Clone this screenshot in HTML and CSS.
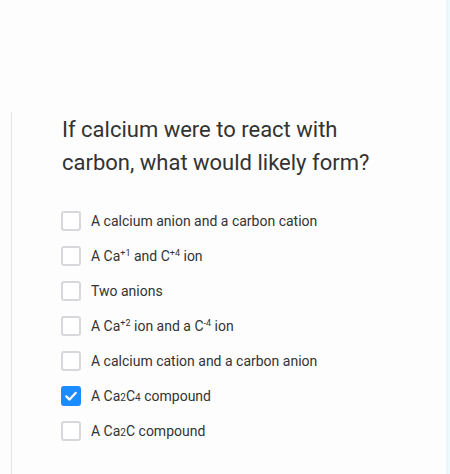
FILE: index.html
```html
<!DOCTYPE html>
<html>
<head>
<meta charset="utf-8">
<link rel="stylesheet" href="styles.css">
</head>
<body>
<div class="page">
  <div class="main">
    <div class="card">
      <h1 class="question">If calcium were to react with carbon, what would likely form?</h1>
      <ul class="options">
        <li class="option"><span class="box"></span><span class="label">A calcium anion and a carbon cation</span></li>
        <li class="option"><span class="box"></span><span class="label">A Ca<sup>+1</sup> and C<sup>+4</sup> ion</span></li>
        <li class="option"><span class="box"></span><span class="label">Two anions</span></li>
        <li class="option"><span class="box"></span><span class="label">A Ca<sup>+2</sup> ion and a C<sup>-4</sup> ion</span></li>
        <li class="option"><span class="box"></span><span class="label">A calcium cation and a carbon anion</span></li>
        <li class="option"><span class="box checked"><svg viewBox="0 0 20 20" width="20" height="20"><path d="M5.2 10.4 L8.6 13.6 L14.8 6.8" fill="none" stroke="#fff" stroke-width="2.2" stroke-linecap="round" stroke-linejoin="round"/></svg></span><span class="label">A Ca<span class="sub">2</span>C<span class="sub">4</span> compound</span></li>
        <li class="option"><span class="box"></span><span class="label">A Ca<span class="sub">2</span>C compound</span></li>
      </ul>
    </div>
  </div>
  <div class="strip"></div>
</div>
</body>
</html>
```

FILE: styles.css
```css
html, body {
  margin: 0;
  padding: 0;
}
body {
  background: #fdfdfd;
  font-family: Roboto, "Liberation Sans", sans-serif;
  color: #333;
  width: 450px;
  height: 474px;
  overflow: hidden;
}
.page {
  display: flex;
  height: 474px;
}
.main {
  flex: 1;
  padding-top: 112px;
  padding-left: 11px;
}
.card {
  border-left: 1px solid #e4e4e4;
  height: 100%;
  padding-left: 49px;
  box-sizing: border-box;
}
.strip {
  width: 4px;
  background: linear-gradient(to right, #e6f6fb, #eefafd);
}
.question {
  margin: 0;
  padding-top: 1px;
  padding-left: 1px;
  font-size: 22px;
  font-weight: 400;
  line-height: 33px;
  width: 320px;
  color: #333;
}
.options {
  list-style: none;
  margin: 0;
  padding: 0;
  margin-top: 24px;
}
.option {
  display: flex;
  align-items: center;
  height: 35px;
  font-size: 14px;
  color: #333;
}
.box {
  width: 20px;
  height: 20px;
  box-sizing: border-box;
  border: 2px solid #d8d8dc;
  border-radius: 3px;
  background: #fff;
  margin-right: 10px;
  flex-shrink: 0;
}
.box.checked {
  background: #1a8cff;
  border-color: #1a8cff;
  display: flex;
  align-items: center;
  justify-content: center;
}
.box.checked svg {
  display: block;
  margin: -2px;
}
sup {
  font-size: 9px;
  vertical-align: 5px;
  line-height: 0;
}
.sub {
  font-size: 10px;
  vertical-align: 0;
}
```
